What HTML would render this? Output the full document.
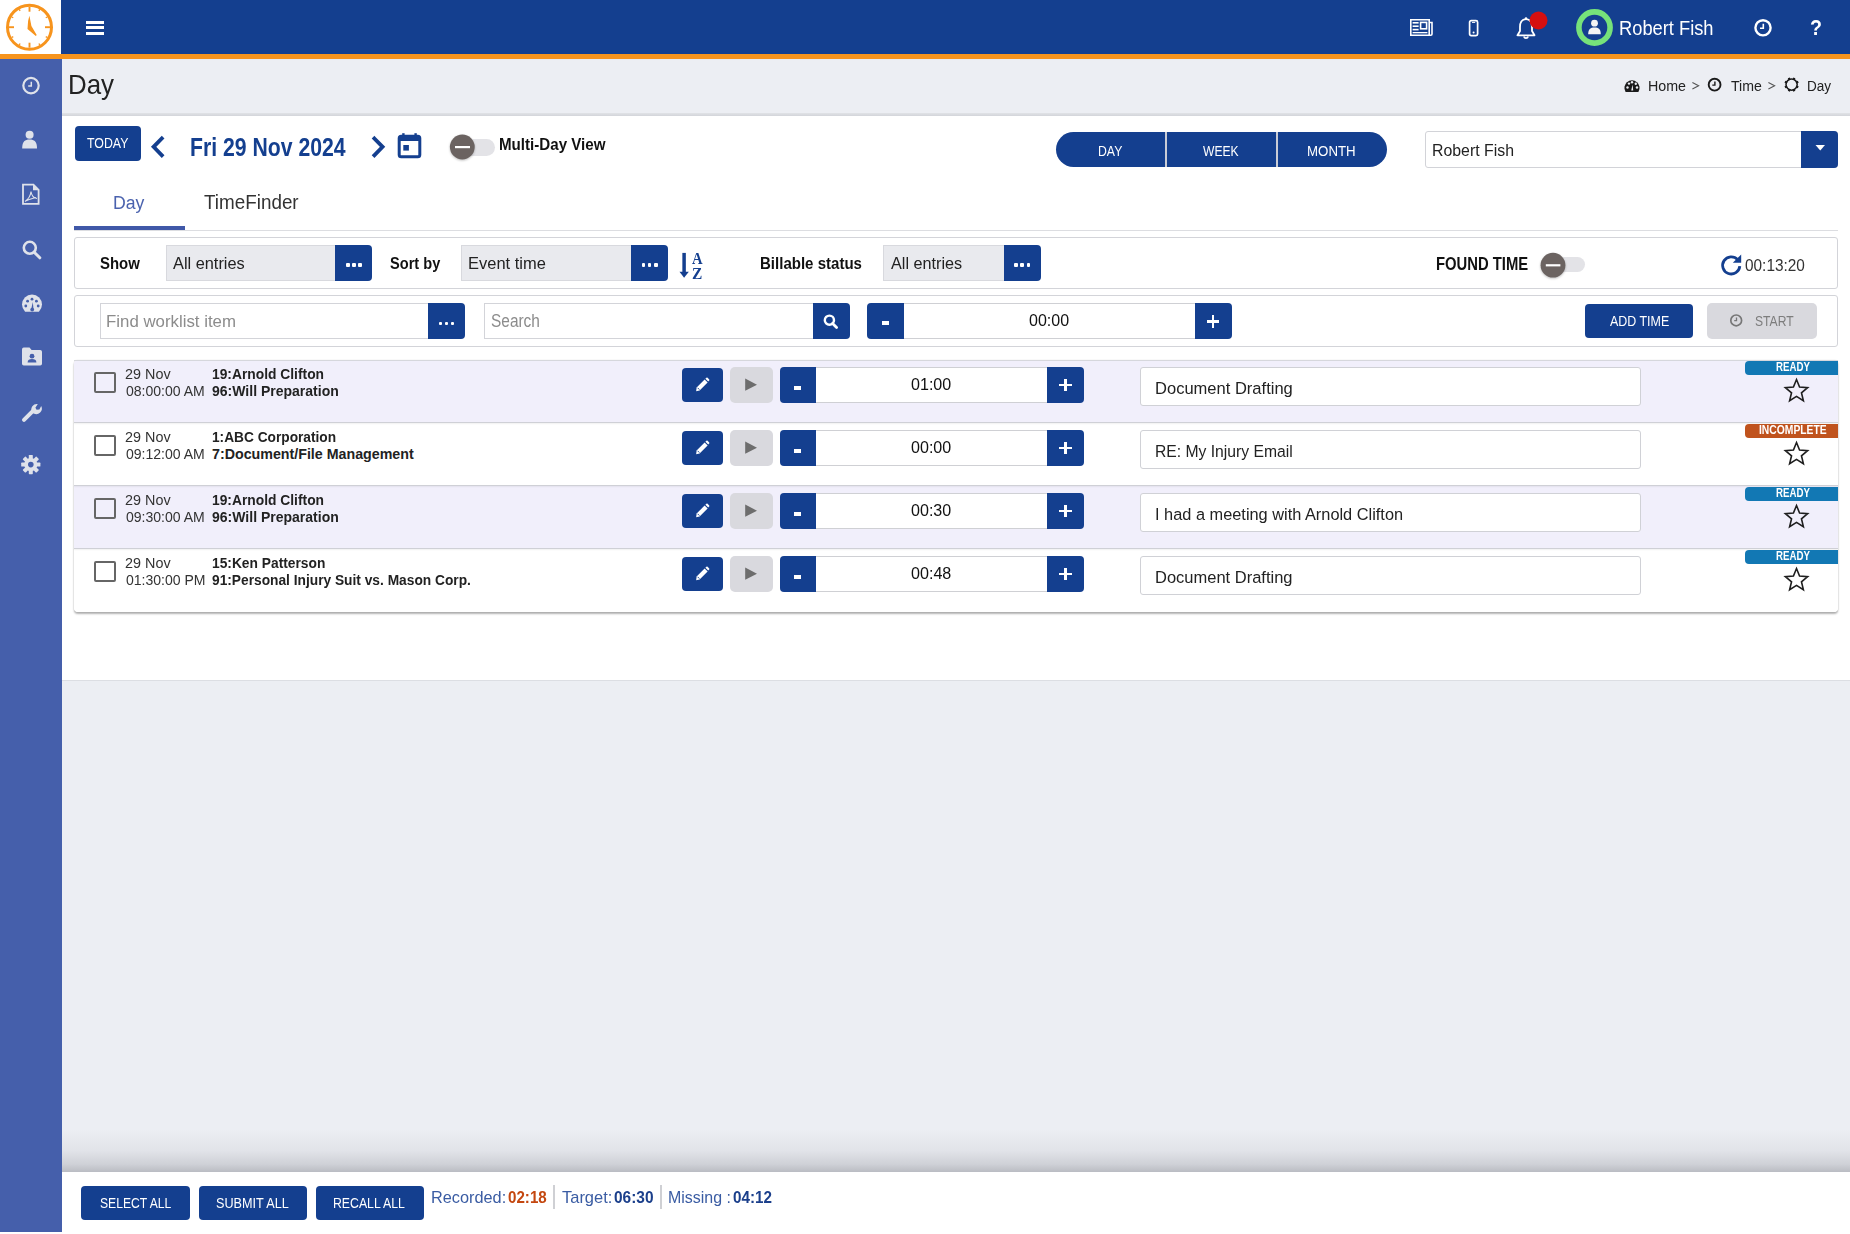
<!DOCTYPE html>
<html><head><meta charset="utf-8"><title>Day</title>
<style>
html,body{margin:0;padding:0;width:1850px;height:1234px;overflow:hidden;background:#fff;font-family:"Liberation Sans",sans-serif}
.t{position:absolute;white-space:nowrap;transform-origin:0 0;font-family:"Liberation Sans",sans-serif}
svg{overflow:visible}
</style></head><body>
<div style="position:absolute;left:0px;top:0px;width:1850px;height:1234px;background:#fff"></div>
<div style="position:absolute;left:62px;top:116px;width:1788px;height:564px;background:#fff"></div>
<div style="position:absolute;left:62px;top:681px;width:1788px;height:491px;background:#eceef3"></div>
<div style="position:absolute;left:62px;top:680px;width:1788px;height:1px;background:#dcdee3"></div>
<div style="position:absolute;left:62px;top:1129px;width:1788px;height:43px;background:linear-gradient(to bottom, rgba(150,152,160,0) 0%, rgba(150,152,160,0.12) 50%, rgba(145,147,155,0.32) 82%, rgba(140,142,150,0.52) 100%)"></div>
<div style="position:absolute;left:61px;top:0px;width:1789px;height:54px;background:#143f8f"></div>
<div style="position:absolute;left:0px;top:54px;width:1850px;height:5px;background:#f7941d"></div>
<div style="position:absolute;left:0px;top:59px;width:62px;height:1173px;background:#455fab"></div>
<div style="position:absolute;left:62px;top:59px;width:1788px;height:54px;background:#eceef3"></div>
<div style="position:absolute;left:62px;top:113px;width:1788px;height:3px;background:linear-gradient(to bottom,#e0e2e6,#d3d5da)"></div>
<svg style="position:absolute;left:0px;top:0px;" width="61" height="54" viewBox="0 0 61 54"><circle cx="29.5" cy="27.2" r="22" fill="none" stroke="#f7941d" stroke-width="3"/><line x1="29.50" y1="6.70" x2="29.50" y2="11.70" stroke="#f7941d" stroke-width="1.9"/><line x1="39.75" y1="9.45" x2="38.90" y2="10.92" stroke="#f7941d" stroke-width="1.3"/><line x1="47.25" y1="16.95" x2="45.78" y2="17.80" stroke="#f7941d" stroke-width="1.3"/><line x1="50.00" y1="27.20" x2="45.00" y2="27.20" stroke="#f7941d" stroke-width="1.9"/><line x1="47.25" y1="37.45" x2="45.78" y2="36.60" stroke="#f7941d" stroke-width="1.3"/><line x1="39.75" y1="44.95" x2="38.90" y2="43.48" stroke="#f7941d" stroke-width="1.3"/><line x1="29.50" y1="47.70" x2="29.50" y2="42.70" stroke="#f7941d" stroke-width="1.9"/><line x1="19.25" y1="44.95" x2="20.10" y2="43.48" stroke="#f7941d" stroke-width="1.3"/><line x1="11.75" y1="37.45" x2="13.22" y2="36.60" stroke="#f7941d" stroke-width="1.3"/><line x1="9.00" y1="27.20" x2="14.00" y2="27.20" stroke="#f7941d" stroke-width="1.9"/><line x1="11.75" y1="16.95" x2="13.22" y2="17.80" stroke="#f7941d" stroke-width="1.3"/><line x1="19.25" y1="9.45" x2="20.10" y2="10.92" stroke="#f7941d" stroke-width="1.3"/><path d="M29.4,15.8 L31.4,26 L36.7,35 L35.8,35.9 L27.5,29 L28.1,21 Z" fill="#f7941d"/></svg>
<div style="position:absolute;left:86px;top:20.5px;width:18px;height:3.3px;background:#fff"></div>
<div style="position:absolute;left:86px;top:26.0px;width:18px;height:3.3px;background:#fff"></div>
<div style="position:absolute;left:86px;top:31.6px;width:18px;height:3.3px;background:#fff"></div>
<svg style="position:absolute;left:1408px;top:17px;" width="27" height="21" viewBox="0 0 27 21"><g fill="none" stroke="#fff" stroke-width="1.6"><path d="M2.8,2.8 H21.2 V18.2 H2.8 Z"/><path d="M21.2,5.5 H24 V17 Q24,18.2 22.8,18.2 H21.2"/></g><g fill="#fff"><rect x="4.6" y="5" width="6" height="1.6"/><rect x="4.6" y="8.4" width="6" height="1.6"/><rect x="4.6" y="11.8" width="6" height="1.6"/><rect x="4.6" y="15" width="14.8" height="1.3"/></g><rect x="12.6" y="5.4" width="6" height="6.4" fill="none" stroke="#fff" stroke-width="1.6"/></svg>
<svg style="position:absolute;left:1467px;top:18px;" width="13" height="19" viewBox="0 0 13 19"><rect x="2.6" y="2.6" width="8" height="15" rx="1.6" fill="none" stroke="#fff" stroke-width="1.7"/><circle cx="6.6" cy="14.6" r="1" fill="#fff"/><rect x="5" y="4" width="3.2" height="0.9" fill="#fff"/></svg>
<svg style="position:absolute;left:1514px;top:15px;" width="24" height="26" viewBox="0 0 24 26"><path d="M12,4.2 C7.5,4.2 6,8 6,12 V16 L3.5,20.3 H20.5 L18,16 V12 C18,8 16.5,4.2 12,4.2 Z" fill="none" stroke="#fff" stroke-width="1.8" stroke-linejoin="round"/><circle cx="12" cy="3.6" r="1.3" fill="#fff"/><path d="M9.8,21.5 A2.3,2.3 0 0 0 14.2,21.5" fill="none" stroke="#fff" stroke-width="1.6"/></svg>
<svg style="position:absolute;left:1529px;top:11px;" width="20" height="20" viewBox="0 0 20 20"><circle cx="9.5" cy="9.5" r="9" fill="#d50f10"/></svg>
<svg style="position:absolute;left:1575px;top:8px;" width="40" height="40" viewBox="0 0 40 40"><circle cx="19.5" cy="19.5" r="15.6" fill="none" stroke="#76e27a" stroke-width="5.6"/><circle cx="19.5" cy="15.2" r="3.4" fill="#f4f4f4"/><path d="M13.2,26.2 C13.2,21 15.5,19.5 19.5,19.5 C23.5,19.5 25.8,21 25.8,26.2 Z" fill="#f4f4f4"/></svg>
<svg style="position:absolute;left:1752px;top:17px;" width="22" height="22" viewBox="0 0 22 22"><circle cx="11" cy="10.8" r="7.6" fill="none" stroke="#fff" stroke-width="2.4"/><path d="M11.3,6.8 V11.2 H8" fill="none" stroke="#fff" stroke-width="1.6"/></svg>
<svg style="position:absolute;left:1690px;top:80px;" width="12" height="12" viewBox="0 0 12 12"><path d="M2.4,2.6 L8.6,5.8 L2.4,9" fill="none" stroke="#555" stroke-width="1.1"/></svg>
<svg style="position:absolute;left:1766px;top:80px;" width="12" height="12" viewBox="0 0 12 12"><path d="M2.4,2.6 L8.6,5.8 L2.4,9" fill="none" stroke="#555" stroke-width="1.1"/></svg>
<svg style="position:absolute;left:1622px;top:76px;" width="20" height="18" viewBox="0 0 20 18"><path d="M3.6,16 A7.6,7.6 0 1 1 16.4,16 Z" fill="#1a1a1a"/><g fill="#eceef3"><circle cx="5.5" cy="11.5" r="1.2"/><circle cx="7" cy="7.6" r="1.2"/><circle cx="10" cy="6.2" r="1.2"/><circle cx="13.8" cy="7.8" r="1.2"/><circle cx="15" cy="11.5" r="1.2"/><path d="M9.2,14.5 L10.6,8.6 L11.2,14.5 Z"/></g></svg>
<svg style="position:absolute;left:1706px;top:76px;" width="18" height="18" viewBox="0 0 18 18"><circle cx="8.6" cy="8.7" r="5.9" fill="none" stroke="#1a1a1a" stroke-width="1.9"/><path d="M8.9,5.6 V9.1 H6.3" fill="none" stroke="#1a1a1a" stroke-width="1.4"/></svg>
<svg style="position:absolute;left:1782px;top:76px;" width="20" height="20" viewBox="0 0 20 20"><g transform="translate(9.6,8.6)"><rect x="-1.1" y="-7.2" width="2.2" height="2.4" transform="rotate(22.5)" fill="#1a1a1a"/><rect x="-1.1" y="-7.2" width="2.2" height="2.4" transform="rotate(67.5)" fill="#1a1a1a"/><rect x="-1.1" y="-7.2" width="2.2" height="2.4" transform="rotate(112.5)" fill="#1a1a1a"/><rect x="-1.1" y="-7.2" width="2.2" height="2.4" transform="rotate(157.5)" fill="#1a1a1a"/><rect x="-1.1" y="-7.2" width="2.2" height="2.4" transform="rotate(202.5)" fill="#1a1a1a"/><rect x="-1.1" y="-7.2" width="2.2" height="2.4" transform="rotate(247.5)" fill="#1a1a1a"/><rect x="-1.1" y="-7.2" width="2.2" height="2.4" transform="rotate(292.5)" fill="#1a1a1a"/><rect x="-1.1" y="-7.2" width="2.2" height="2.4" transform="rotate(337.5)" fill="#1a1a1a"/><circle cx="0" cy="0" r="5.6" fill="none" stroke="#1a1a1a" stroke-width="1.5"/></g></svg>
<svg style="position:absolute;left:20px;top:75px;" width="22" height="22" viewBox="0 0 22 22"><circle cx="11" cy="10.6" r="7.7" fill="none" stroke="#dfe2ea" stroke-width="2.2"/><path d="M11.3,6.7 V11 H8.2" fill="none" stroke="#dfe2ea" stroke-width="1.5"/></svg>
<svg style="position:absolute;left:20px;top:128px;" width="22" height="24" viewBox="0 0 22 24"><circle cx="9.6" cy="6.8" r="4" fill="#dfe2ea"/><path d="M2.2,20.6 C2.2,13.5 5,11.6 9.6,11.6 C14.2,11.6 17,13.5 17,20.6 Z" fill="#dfe2ea"/></svg>
<svg style="position:absolute;left:20px;top:182px;" width="22" height="25" viewBox="0 0 22 25"><path d="M3,2.6 H13.4 L18.6,7.8 V21.8 H3 Z" fill="none" stroke="#dfe2ea" stroke-width="1.8"/><path d="M13,2.6 V8.2 H18.6" fill="#dfe2ea"/><path d="M11,9.5 C10.5,14 8,17.5 5,19.5 M11,9.5 C11.5,13.5 13.5,16 17,16.5 M5.5,19 C9,17 12,16.5 16,15.5" fill="none" stroke="#dfe2ea" stroke-width="1.1"/></svg>
<svg style="position:absolute;left:20px;top:238px;" width="24" height="24" viewBox="0 0 24 24"><circle cx="9.8" cy="9.8" r="6" fill="none" stroke="#dfe2ea" stroke-width="2.6"/><path d="M14.2,14.2 L19.8,19.8" stroke="#dfe2ea" stroke-width="3" stroke-linecap="round"/></svg>
<svg style="position:absolute;left:20px;top:292px;" width="24" height="22" viewBox="0 0 24 22"><path d="M5.1,19.7 A10,10 0 1 1 18.9,19.7 Z" fill="#dfe2ea"/><g fill="#455fab"><circle cx="5.8" cy="14" r="1.4"/><circle cx="7.6" cy="9.2" r="1.4"/><circle cx="12" cy="7.2" r="1.4"/><circle cx="16.4" cy="9.2" r="1.4"/><circle cx="18.2" cy="14" r="1.4"/><path d="M11,18 L12.8,10 L13.6,18 Z"/></g><circle cx="12.2" cy="17.6" r="1.9" fill="#455fab"/></svg>
<svg style="position:absolute;left:20px;top:345px;" width="24" height="24" viewBox="0 0 24 24"><path d="M2,4.5 Q2,2.6 3.8,2.6 H9.5 L11.6,5 H20.2 Q22,5 22,6.8 V18.8 Q22,20.6 20.2,20.6 H3.8 Q2,20.6 2,18.8 Z" fill="#dfe2ea"/><circle cx="12" cy="11.2" r="2.4" fill="#455fab"/><path d="M7.6,17.6 C7.6,14.8 9.4,14 12,14 C14.6,14 16.4,14.8 16.4,17.6 Z" fill="#455fab"/></svg>
<svg style="position:absolute;left:20px;top:400px;" width="24" height="24" viewBox="0 0 24 24"><path d="M4,19.8 L12.5,11.3" stroke="#dfe2ea" stroke-width="4" stroke-linecap="round"/><path d="M12,12.2 A5.6,5.6 0 0 1 17.8,4 L15.4,7.8 L16.6,9.8 L19.4,9.4 L21.2,6 A5.6,5.6 0 0 1 13.6,13.5 Z" fill="#dfe2ea"/></svg>
<svg style="position:absolute;left:20px;top:454px;" width="24" height="24" viewBox="0 0 24 24"><g transform="translate(10.8,10.6)"><rect x="-2" y="-9.6" width="4" height="4.2" rx="0.6" transform="rotate(0)" fill="#dfe2ea"/><rect x="-2" y="-9.6" width="4" height="4.2" rx="0.6" transform="rotate(45)" fill="#dfe2ea"/><rect x="-2" y="-9.6" width="4" height="4.2" rx="0.6" transform="rotate(90)" fill="#dfe2ea"/><rect x="-2" y="-9.6" width="4" height="4.2" rx="0.6" transform="rotate(135)" fill="#dfe2ea"/><rect x="-2" y="-9.6" width="4" height="4.2" rx="0.6" transform="rotate(180)" fill="#dfe2ea"/><rect x="-2" y="-9.6" width="4" height="4.2" rx="0.6" transform="rotate(225)" fill="#dfe2ea"/><rect x="-2" y="-9.6" width="4" height="4.2" rx="0.6" transform="rotate(270)" fill="#dfe2ea"/><rect x="-2" y="-9.6" width="4" height="4.2" rx="0.6" transform="rotate(315)" fill="#dfe2ea"/><circle r="6.6" fill="#dfe2ea"/><circle r="2.8" fill="#455fab"/></g></svg>
<div style="position:absolute;left:75px;top:126px;width:66px;height:35px;background:#143f8f;border-radius:4px"></div>
<svg style="position:absolute;left:146px;top:132px;" width="24" height="30" viewBox="0 0 24 30"><path d="M15.8,6.5 L7.6,14.8 L15.8,23.2" fill="none" stroke="#143f8f" stroke-width="3.8" stroke-linecap="square"/></svg>
<svg style="position:absolute;left:366px;top:132px;" width="24" height="30" viewBox="0 0 24 30"><path d="M8.4,6.5 L16.6,14.8 L8.4,23.2" fill="none" stroke="#143f8f" stroke-width="3.8" stroke-linecap="square"/></svg>
<svg style="position:absolute;left:396px;top:131px;" width="28" height="30" viewBox="0 0 28 30"><rect x="3.2" y="5.3" width="20.6" height="20.4" rx="2" fill="none" stroke="#143f8f" stroke-width="3"/><rect x="3" y="5" width="21" height="5" fill="#143f8f"/><rect x="6.2" y="2.2" width="2.4" height="4" fill="#143f8f"/><rect x="18.4" y="2.2" width="2.4" height="4" fill="#143f8f"/><rect x="7.3" y="14" width="5.6" height="5.6" fill="#143f8f"/></svg>
<div style="position:absolute;left:458px;top:138.6px;width:36.5px;height:17.0px;background:#e3e3e7;border-radius:9px"></div>
<svg style="position:absolute;left:446px;top:130px;" width="34" height="34" viewBox="0 0 34 34"><circle cx="16.3" cy="17" r="12.4" fill="#6b6361" style="filter:drop-shadow(0 1px 1px rgba(0,0,0,.25))"/><rect x="9" y="16" width="15" height="2.2" fill="#fff"/></svg>
<div style="position:absolute;left:1056px;top:132px;width:331px;height:35px;background:#143f8f;border-radius:18px"></div>
<div style="position:absolute;left:1165px;top:132px;width:2px;height:35px;background:#c9ccd6"></div>
<div style="position:absolute;left:1275.5px;top:132px;width:2.0px;height:35px;background:#c9ccd6"></div>
<div style="position:absolute;left:1425px;top:131px;width:413px;height:37px;background:#fff;border:1px solid #d2d3d8;box-sizing:border-box;border-radius:3px"></div>
<div style="position:absolute;left:1800.5px;top:131px;width:37.5px;height:37px;background:#143f8f;border-radius:0 4px 4px 0"></div>
<svg style="position:absolute;left:1813px;top:143px;" width="14" height="10" viewBox="0 0 14 10"><path d="M2.5,2 H12 L7.25,7.5 Z" fill="#fff"/></svg>
<div style="position:absolute;left:74px;top:229.5px;width:1764px;height:1.0px;background:#dcdde1"></div>
<div style="position:absolute;left:74px;top:226px;width:111px;height:4px;background:#4058a8"></div>
<div style="position:absolute;left:74px;top:237px;width:1764px;height:52px;border:1px solid #d3d4d9;box-sizing:border-box;border-radius:3px;background:#fff"></div>
<div style="position:absolute;left:165.5px;top:244.6px;width:171.9px;height:36.5px;background:#e9eaee;border:1px solid #d8d9de;box-sizing:border-box"></div>
<div style="position:absolute;left:335.4px;top:244.6px;width:36.9px;height:36.5px;background:#143f8f;border-radius:0 4px 4px 0"></div>
<div style="position:absolute;left:345.95px;top:263.2px;width:3.6px;height:3.7px;background:#fff;border-radius:1px"></div>
<div style="position:absolute;left:352.05px;top:263.2px;width:3.6px;height:3.7px;background:#fff;border-radius:1px"></div>
<div style="position:absolute;left:358.15px;top:263.2px;width:3.6px;height:3.7px;background:#fff;border-radius:1px"></div>
<div style="position:absolute;left:461.4px;top:245px;width:172.0px;height:36px;background:#e9eaee;border:1px solid #d8d9de;box-sizing:border-box"></div>
<div style="position:absolute;left:631.4px;top:245px;width:36.6px;height:36px;background:#143f8f;border-radius:0 4px 4px 0"></div>
<div style="position:absolute;left:641.8px;top:263.35px;width:3.6px;height:3.7px;background:#fff;border-radius:1px"></div>
<div style="position:absolute;left:647.9px;top:263.35px;width:3.6px;height:3.7px;background:#fff;border-radius:1px"></div>
<div style="position:absolute;left:654.0px;top:263.35px;width:3.6px;height:3.7px;background:#fff;border-radius:1px"></div>
<svg style="position:absolute;left:676px;top:250px;" width="30" height="30" viewBox="0 0 30 30"><path d="M8.1,2.9 V23" stroke="#143f8f" stroke-width="3.5"/><path d="M3.5,21.8 L8.1,27.8 L12.8,21.8 Z" fill="#143f8f"/></svg>
<div style="position:absolute;left:883.3px;top:244.9px;width:122.5px;height:36.0px;background:#e9eaee;border:1px solid #d8d9de;box-sizing:border-box"></div>
<div style="position:absolute;left:1003.8px;top:244.9px;width:36.8px;height:36.0px;background:#143f8f;border-radius:0 4px 4px 0"></div>
<div style="position:absolute;left:1014.3px;top:263.25px;width:3.6px;height:3.7px;background:#fff;border-radius:1px"></div>
<div style="position:absolute;left:1020.4px;top:263.25px;width:3.6px;height:3.7px;background:#fff;border-radius:1px"></div>
<div style="position:absolute;left:1026.5px;top:263.25px;width:3.6px;height:3.7px;background:#fff;border-radius:1px"></div>
<div style="position:absolute;left:1548px;top:256.7px;width:36.6px;height:15.8px;background:#e3e3e7;border-radius:8px"></div>
<svg style="position:absolute;left:1538px;top:250px;" width="30" height="30" viewBox="0 0 30 30"><circle cx="15" cy="15.2" r="12.4" fill="#6b6361" style="filter:drop-shadow(0 1px 1px rgba(0,0,0,.25))"/><rect x="7.8" y="14.2" width="14.6" height="2.2" fill="#fff"/></svg>
<svg style="position:absolute;left:1717.6px;top:251px;" width="26" height="26" viewBox="0 0 26 26"><path d="M19.6,8.6 A8.6,8.6 0 1 0 21.8,15.2" fill="none" stroke="#143f8f" stroke-width="2.8"/><path d="M23.2,3.4 V11.8 H14.8 Z" fill="#143f8f"/></svg>
<div style="position:absolute;left:74px;top:295px;width:1764px;height:51.5px;border:1px solid #d3d4d9;box-sizing:border-box;border-radius:3px;background:#fff"></div>
<div style="position:absolute;left:100.3px;top:303px;width:329.7px;height:36.4px;background:#fff;border:1px solid #d3d4d9;box-sizing:border-box"></div>
<div style="position:absolute;left:428.3px;top:303px;width:36.4px;height:36.4px;background:#143f8f;border-radius:0 4px 4px 0"></div>
<div style="position:absolute;left:438.6px;top:321.5px;width:3.6px;height:3.7px;background:#fff;border-radius:1px"></div>
<div style="position:absolute;left:444.7px;top:321.5px;width:3.6px;height:3.7px;background:#fff;border-radius:1px"></div>
<div style="position:absolute;left:450.8px;top:321.5px;width:3.6px;height:3.7px;background:#fff;border-radius:1px"></div>
<div style="position:absolute;left:484px;top:303px;width:331px;height:36.4px;background:#fff;border:1px solid #d3d4d9;box-sizing:border-box"></div>
<div style="position:absolute;left:813px;top:303px;width:36.7px;height:36.4px;background:#143f8f;border-radius:0 4px 4px 0"></div>
<svg style="position:absolute;left:821px;top:312px;" width="20" height="20" viewBox="0 0 20 20"><circle cx="8.4" cy="8.2" r="4.6" fill="none" stroke="#fff" stroke-width="2.4"/><path d="M11.6,11.4 L15.6,15.4" stroke="#fff" stroke-width="2.8" stroke-linecap="round"/></svg>
<div style="position:absolute;left:900px;top:302.8px;width:300px;height:36.5px;background:#fff;border-top:1px solid #cfd0d4;border-bottom:1px solid #cfd0d4;box-sizing:border-box"></div>
<div style="position:absolute;left:867.4px;top:302.8px;width:36.4px;height:36.5px;background:#143f8f;border-radius:4px 0 0 4px"></div>
<div style="position:absolute;left:1195.2px;top:302.8px;width:36.4px;height:36.5px;background:#143f8f;border-radius:0 4px 4px 0"></div>
<div style="position:absolute;left:881.7px;top:321.2px;width:7.3px;height:4.0px;background:#fff"></div>
<div style="position:absolute;left:1206.8px;top:320.4px;width:12.6px;height:2.9px;background:#fff"></div>
<div style="position:absolute;left:1211.7px;top:315.4px;width:2.8px;height:12.7px;background:#fff"></div>
<div style="position:absolute;left:1584.8px;top:303.8px;width:108.6px;height:34.3px;background:#143f8f;border-radius:4px"></div>
<div style="position:absolute;left:1707.3px;top:302.6px;width:110.2px;height:36.6px;background:#d9d9de;border-radius:5px"></div>
<svg style="position:absolute;left:1727px;top:311px;" width="19" height="19" viewBox="0 0 19 19"><circle cx="9.2" cy="9.4" r="5.4" fill="none" stroke="#777" stroke-width="1.7"/><path d="M9.5,6.4 V9.7 H7.2" fill="none" stroke="#777" stroke-width="1.3"/></svg>
<div style="position:absolute;left:74px;top:359.5px;width:1764px;height:252.5px;background:#fff;border-radius:4px;box-shadow:0 2px 2px rgba(0,0,0,0.3), 0 0 1px rgba(0,0,0,0.25)"></div>
<div style="position:absolute;left:74px;top:359.5px;width:1764px;height:63.0px;background:#f1effb;border-radius:4px 4px 0 0;"></div>
<div style="position:absolute;left:74px;top:359.5px;width:1764px;height:1.0px;background:#d6d7dc"></div>
<div style="position:absolute;left:94.2px;top:371.8px;width:21.9px;height:21.5px;border:2.4px solid #666;box-sizing:border-box;border-radius:2px;background:transparent"></div>
<div style="position:absolute;left:681.8px;top:367.7px;width:41.0px;height:34.5px;background:#143f8f;border-radius:4px"></div>
<svg style="position:absolute;left:692px;top:375px;" width="20" height="20" viewBox="0 0 20 20"><path d="M4.2,16.2 L4.6,12.6 L12.6,4.6 L15.6,7.6 L7.6,15.6 Z" fill="#fff"/><path d="M13.4,3.8 L14.4,2.8 Q15,2.3 15.6,2.8 L17.2,4.4 Q17.7,5 17.2,5.6 L16.2,6.6 Z" fill="#fff"/><path d="M5.6,12.8 L7.4,14.6" stroke="#143f8f" stroke-width="0.9"/></svg>
<div style="position:absolute;left:730.3px;top:366.8px;width:42.7px;height:36.7px;background:#d9d9de;border-radius:5px"></div>
<svg style="position:absolute;left:743px;top:376px;" width="18" height="18" viewBox="0 0 18 18"><path d="M2.2,2.6 L14,8.7 L2.2,14.8 Z" fill="#6d6d6d"/></svg>
<div style="position:absolute;left:810px;top:367px;width:240px;height:36.2px;background:#fff;border-top:1px solid #cfd0d4;border-bottom:1px solid #cfd0d4;box-sizing:border-box"></div>
<div style="position:absolute;left:779.7px;top:366.8px;width:36.8px;height:36.7px;background:#143f8f;border-radius:4px 0 0 4px"></div>
<div style="position:absolute;left:1047.2px;top:367px;width:36.6px;height:36.2px;background:#143f8f;border-radius:0 4px 4px 0"></div>
<div style="position:absolute;left:793.7px;top:386.2px;width:7.5px;height:3.4px;background:#fff"></div>
<div style="position:absolute;left:1059.2px;top:383.6px;width:12.6px;height:2.9px;background:#fff"></div>
<div style="position:absolute;left:1064.1px;top:378.8px;width:2.8px;height:12.6px;background:#fff"></div>
<div style="position:absolute;left:1140.3px;top:367.1px;width:500.8px;height:38.5px;background:#fff;border:1px solid #d0d1d6;box-sizing:border-box;border-radius:3px"></div>
<div style="position:absolute;left:1745px;top:360.6px;width:93px;height:14.3px;background:#1278b4;border-radius:4px 0 0 4px"></div>
<svg style="position:absolute;left:1780px;top:375px;" width="34" height="32" viewBox="0 0 34 32"><polygon points="16.50,4.50 19.56,11.99 27.63,12.58 21.45,17.81 23.38,25.67 16.50,21.40 9.62,25.67 11.55,17.81 5.37,12.58 13.44,11.99" fill="none" stroke="#1e1e1e" stroke-width="1.6" stroke-linejoin="miter"/></svg>
<div style="position:absolute;left:74px;top:422.5px;width:1764px;height:63.0px;background:#fff;"></div>
<div style="position:absolute;left:74px;top:422.0px;width:1764px;height:1.0px;background:#cfd0d6;box-shadow:0 1px 1.5px rgba(0,0,0,0.07)"></div>
<div style="position:absolute;left:94.2px;top:434.8px;width:21.9px;height:21.5px;border:2.4px solid #666;box-sizing:border-box;border-radius:2px;background:transparent"></div>
<div style="position:absolute;left:681.8px;top:430.7px;width:41.0px;height:34.5px;background:#143f8f;border-radius:4px"></div>
<svg style="position:absolute;left:692px;top:438px;" width="20" height="20" viewBox="0 0 20 20"><path d="M4.2,16.2 L4.6,12.6 L12.6,4.6 L15.6,7.6 L7.6,15.6 Z" fill="#fff"/><path d="M13.4,3.8 L14.4,2.8 Q15,2.3 15.6,2.8 L17.2,4.4 Q17.7,5 17.2,5.6 L16.2,6.6 Z" fill="#fff"/><path d="M5.6,12.8 L7.4,14.6" stroke="#143f8f" stroke-width="0.9"/></svg>
<div style="position:absolute;left:730.3px;top:429.8px;width:42.7px;height:36.7px;background:#d9d9de;border-radius:5px"></div>
<svg style="position:absolute;left:743px;top:439px;" width="18" height="18" viewBox="0 0 18 18"><path d="M2.2,2.6 L14,8.7 L2.2,14.8 Z" fill="#6d6d6d"/></svg>
<div style="position:absolute;left:810px;top:430px;width:240px;height:36.2px;background:#fff;border-top:1px solid #cfd0d4;border-bottom:1px solid #cfd0d4;box-sizing:border-box"></div>
<div style="position:absolute;left:779.7px;top:429.8px;width:36.8px;height:36.7px;background:#143f8f;border-radius:4px 0 0 4px"></div>
<div style="position:absolute;left:1047.2px;top:430px;width:36.6px;height:36.2px;background:#143f8f;border-radius:0 4px 4px 0"></div>
<div style="position:absolute;left:793.7px;top:449.2px;width:7.5px;height:3.4px;background:#fff"></div>
<div style="position:absolute;left:1059.2px;top:446.6px;width:12.6px;height:2.9px;background:#fff"></div>
<div style="position:absolute;left:1064.1px;top:441.8px;width:2.8px;height:12.6px;background:#fff"></div>
<div style="position:absolute;left:1140.3px;top:430.1px;width:500.8px;height:38.5px;background:#fff;border:1px solid #d0d1d6;box-sizing:border-box;border-radius:3px"></div>
<div style="position:absolute;left:1745px;top:423.6px;width:93px;height:14.3px;background:#c0531d;border-radius:4px 0 0 4px"></div>
<svg style="position:absolute;left:1780px;top:438px;" width="34" height="32" viewBox="0 0 34 32"><polygon points="16.50,4.50 19.56,11.99 27.63,12.58 21.45,17.81 23.38,25.67 16.50,21.40 9.62,25.67 11.55,17.81 5.37,12.58 13.44,11.99" fill="none" stroke="#1e1e1e" stroke-width="1.6" stroke-linejoin="miter"/></svg>
<div style="position:absolute;left:74px;top:485.5px;width:1764px;height:63.0px;background:#f1effb;"></div>
<div style="position:absolute;left:74px;top:485.0px;width:1764px;height:1.0px;background:#cfd0d6;box-shadow:0 1px 1.5px rgba(0,0,0,0.07)"></div>
<div style="position:absolute;left:94.2px;top:497.8px;width:21.9px;height:21.5px;border:2.4px solid #666;box-sizing:border-box;border-radius:2px;background:transparent"></div>
<div style="position:absolute;left:681.8px;top:493.7px;width:41.0px;height:34.5px;background:#143f8f;border-radius:4px"></div>
<svg style="position:absolute;left:692px;top:501px;" width="20" height="20" viewBox="0 0 20 20"><path d="M4.2,16.2 L4.6,12.6 L12.6,4.6 L15.6,7.6 L7.6,15.6 Z" fill="#fff"/><path d="M13.4,3.8 L14.4,2.8 Q15,2.3 15.6,2.8 L17.2,4.4 Q17.7,5 17.2,5.6 L16.2,6.6 Z" fill="#fff"/><path d="M5.6,12.8 L7.4,14.6" stroke="#143f8f" stroke-width="0.9"/></svg>
<div style="position:absolute;left:730.3px;top:492.8px;width:42.7px;height:36.7px;background:#d9d9de;border-radius:5px"></div>
<svg style="position:absolute;left:743px;top:502px;" width="18" height="18" viewBox="0 0 18 18"><path d="M2.2,2.6 L14,8.7 L2.2,14.8 Z" fill="#6d6d6d"/></svg>
<div style="position:absolute;left:810px;top:493px;width:240px;height:36.2px;background:#fff;border-top:1px solid #cfd0d4;border-bottom:1px solid #cfd0d4;box-sizing:border-box"></div>
<div style="position:absolute;left:779.7px;top:492.8px;width:36.8px;height:36.7px;background:#143f8f;border-radius:4px 0 0 4px"></div>
<div style="position:absolute;left:1047.2px;top:493px;width:36.6px;height:36.2px;background:#143f8f;border-radius:0 4px 4px 0"></div>
<div style="position:absolute;left:793.7px;top:512.2px;width:7.5px;height:3.4px;background:#fff"></div>
<div style="position:absolute;left:1059.2px;top:509.6px;width:12.6px;height:2.9px;background:#fff"></div>
<div style="position:absolute;left:1064.1px;top:504.8px;width:2.8px;height:12.6px;background:#fff"></div>
<div style="position:absolute;left:1140.3px;top:493.1px;width:500.8px;height:38.5px;background:#fff;border:1px solid #d0d1d6;box-sizing:border-box;border-radius:3px"></div>
<div style="position:absolute;left:1745px;top:486.6px;width:93px;height:14.3px;background:#1278b4;border-radius:4px 0 0 4px"></div>
<svg style="position:absolute;left:1780px;top:501px;" width="34" height="32" viewBox="0 0 34 32"><polygon points="16.50,4.50 19.56,11.99 27.63,12.58 21.45,17.81 23.38,25.67 16.50,21.40 9.62,25.67 11.55,17.81 5.37,12.58 13.44,11.99" fill="none" stroke="#1e1e1e" stroke-width="1.6" stroke-linejoin="miter"/></svg>
<div style="position:absolute;left:74px;top:548.5px;width:1764px;height:63.0px;background:#fff;border-radius:0 0 4px 4px;"></div>
<div style="position:absolute;left:74px;top:548.0px;width:1764px;height:1.0px;background:#cfd0d6;box-shadow:0 1px 1.5px rgba(0,0,0,0.07)"></div>
<div style="position:absolute;left:94.2px;top:560.8px;width:21.9px;height:21.5px;border:2.4px solid #666;box-sizing:border-box;border-radius:2px;background:transparent"></div>
<div style="position:absolute;left:681.8px;top:556.7px;width:41.0px;height:34.5px;background:#143f8f;border-radius:4px"></div>
<svg style="position:absolute;left:692px;top:564px;" width="20" height="20" viewBox="0 0 20 20"><path d="M4.2,16.2 L4.6,12.6 L12.6,4.6 L15.6,7.6 L7.6,15.6 Z" fill="#fff"/><path d="M13.4,3.8 L14.4,2.8 Q15,2.3 15.6,2.8 L17.2,4.4 Q17.7,5 17.2,5.6 L16.2,6.6 Z" fill="#fff"/><path d="M5.6,12.8 L7.4,14.6" stroke="#143f8f" stroke-width="0.9"/></svg>
<div style="position:absolute;left:730.3px;top:555.8px;width:42.7px;height:36.7px;background:#d9d9de;border-radius:5px"></div>
<svg style="position:absolute;left:743px;top:565px;" width="18" height="18" viewBox="0 0 18 18"><path d="M2.2,2.6 L14,8.7 L2.2,14.8 Z" fill="#6d6d6d"/></svg>
<div style="position:absolute;left:810px;top:556px;width:240px;height:36.2px;background:#fff;border-top:1px solid #cfd0d4;border-bottom:1px solid #cfd0d4;box-sizing:border-box"></div>
<div style="position:absolute;left:779.7px;top:555.8px;width:36.8px;height:36.7px;background:#143f8f;border-radius:4px 0 0 4px"></div>
<div style="position:absolute;left:1047.2px;top:556px;width:36.6px;height:36.2px;background:#143f8f;border-radius:0 4px 4px 0"></div>
<div style="position:absolute;left:793.7px;top:575.2px;width:7.5px;height:3.4px;background:#fff"></div>
<div style="position:absolute;left:1059.2px;top:572.6px;width:12.6px;height:2.9px;background:#fff"></div>
<div style="position:absolute;left:1064.1px;top:567.8px;width:2.8px;height:12.6px;background:#fff"></div>
<div style="position:absolute;left:1140.3px;top:556.1px;width:500.8px;height:38.5px;background:#fff;border:1px solid #d0d1d6;box-sizing:border-box;border-radius:3px"></div>
<div style="position:absolute;left:1745px;top:549.6px;width:93px;height:14.3px;background:#1278b4;border-radius:4px 0 0 4px"></div>
<svg style="position:absolute;left:1780px;top:564px;" width="34" height="32" viewBox="0 0 34 32"><polygon points="16.50,4.50 19.56,11.99 27.63,12.58 21.45,17.81 23.38,25.67 16.50,21.40 9.62,25.67 11.55,17.81 5.37,12.58 13.44,11.99" fill="none" stroke="#1e1e1e" stroke-width="1.6" stroke-linejoin="miter"/></svg>
<div style="position:absolute;left:81.4px;top:1185.5px;width:108.3px;height:34.3px;background:#143f8f;border-radius:4px"></div>
<div style="position:absolute;left:198.8px;top:1185.5px;width:108.0px;height:34.3px;background:#143f8f;border-radius:4px"></div>
<div style="position:absolute;left:315.7px;top:1185.5px;width:108.6px;height:34.3px;background:#143f8f;border-radius:4px"></div>
<div style="position:absolute;left:553px;top:1185px;width:2px;height:24px;background:#cfd0d4"></div>
<div style="position:absolute;left:660.3px;top:1185px;width:2.0px;height:24px;background:#cfd0d4"></div>
<div class="t" style="left:1618.54px;top:17.82px;font-size:20.29px;line-height:20.29px;font-weight:normal;color:#fff;transform:scaleX(0.9019);">Robert Fish</div>
<div class="t" style="left:1810.12px;top:16.73px;font-size:21.58px;line-height:21.58px;font-weight:bold;color:#fff;transform:scaleX(0.9085);">?</div>
<div class="t" style="left:67.93px;top:70.69px;font-size:27.54px;line-height:27.54px;font-weight:normal;color:#222;transform:scaleX(0.9409);">Day</div>
<div class="t" style="left:1647.56px;top:77.62px;font-size:15.22px;line-height:15.22px;font-weight:normal;color:#222;transform:scaleX(0.9368);">Home</div>
<div class="t" style="left:1730.72px;top:77.62px;font-size:15.22px;line-height:15.22px;font-weight:normal;color:#222;transform:scaleX(0.9282);">Time</div>
<div class="t" style="left:1806.92px;top:77.62px;font-size:15.22px;line-height:15.22px;font-weight:normal;color:#222;transform:scaleX(0.8900);">Day</div>
<div class="t" style="left:87.35px;top:136.23px;font-size:14.49px;line-height:14.49px;font-weight:normal;color:#fff;transform:scaleX(0.8525);">TODAY</div>
<div class="t" style="left:190.12px;top:135.22px;font-size:24.89px;line-height:24.89px;font-weight:bold;color:#143f8f;transform:scaleX(0.8525);">Fri 29 Nov 2024</div>
<div class="t" style="left:498.82px;top:136.42px;font-size:16.98px;line-height:16.98px;font-weight:bold;color:#111;transform:scaleX(0.8916);">Multi-Day View</div>
<div class="t" style="left:1097.72px;top:143.63px;font-size:14.49px;line-height:14.49px;font-weight:normal;color:#fff;transform:scaleX(0.8478);">DAY</div>
<div class="t" style="left:1203.30px;top:143.63px;font-size:14.49px;line-height:14.49px;font-weight:normal;color:#fff;transform:scaleX(0.8338);">WEEK</div>
<div class="t" style="left:1307.24px;top:143.63px;font-size:14.49px;line-height:14.49px;font-weight:normal;color:#fff;transform:scaleX(0.9164);">MONTH</div>
<div class="t" style="left:1431.93px;top:141.96px;font-size:16.23px;line-height:16.23px;font-weight:normal;color:#222;transform:scaleX(0.9779);">Robert Fish</div>
<div class="t" style="left:113.39px;top:192.93px;font-size:18.99px;line-height:18.99px;font-weight:normal;color:#4a62ae;transform:scaleX(0.9304);">Day</div>
<div class="t" style="left:203.52px;top:193.09px;font-size:19.86px;line-height:19.86px;font-weight:normal;color:#333;transform:scaleX(0.9494);">TimeFinder</div>
<div class="t" style="left:99.93px;top:255.02px;font-size:16.98px;line-height:16.98px;font-weight:bold;color:#111;transform:scaleX(0.8800);">Show</div>
<div class="t" style="left:172.80px;top:254.92px;font-size:17.10px;line-height:17.10px;font-weight:normal;color:#222;transform:scaleX(0.9559);">All entries</div>
<div class="t" style="left:390.34px;top:256.27px;font-size:16.69px;line-height:16.69px;font-weight:bold;color:#111;transform:scaleX(0.8745);">Sort by</div>
<div class="t" style="left:468.18px;top:256.17px;font-size:16.81px;line-height:16.81px;font-weight:normal;color:#222;transform:scaleX(0.9808);">Event time</div>
<div class="t" style="left:691.53px;top:250.90px;font-size:16.36px;line-height:16.36px;font-weight:bold;color:#143f8f;font-family:'Liberation Serif',serif;transform:scaleX(0.8951);">A</div>
<div class="t" style="left:691.90px;top:266.25px;font-size:16.18px;line-height:16.18px;font-weight:bold;color:#143f8f;font-family:'Liberation Serif',serif;transform:scaleX(0.9564);">Z</div>
<div class="t" style="left:759.52px;top:255.31px;font-size:16.40px;line-height:16.40px;font-weight:bold;color:#111;transform:scaleX(0.9174);">Billable status</div>
<div class="t" style="left:891.00px;top:256.21px;font-size:16.52px;line-height:16.52px;font-weight:normal;color:#222;transform:scaleX(0.9811);">All entries</div>
<div class="t" style="left:1435.74px;top:255.69px;font-size:17.84px;line-height:17.84px;font-weight:bold;color:#111;transform:scaleX(0.8307);">FOUND TIME</div>
<div class="t" style="left:1745.36px;top:258.02px;font-size:15.80px;line-height:15.80px;font-weight:normal;color:#333;transform:scaleX(0.9740);">00:13:20</div>
<div class="t" style="left:106.45px;top:313.74px;font-size:16.96px;line-height:16.96px;font-weight:normal;color:#8c8c8c;transform:scaleX(0.9935);">Find worklist item</div>
<div class="t" style="left:491.00px;top:312.53px;font-size:17.68px;line-height:17.68px;font-weight:normal;color:#8c8c8c;transform:scaleX(0.8736);">Search</div>
<div class="t" style="left:1029.14px;top:312.50px;font-size:15.94px;line-height:15.94px;font-weight:normal;color:#111;transform:scaleX(1.0062);">00:00</div>
<div class="t" style="left:1609.70px;top:313.97px;font-size:14.20px;line-height:14.20px;font-weight:normal;color:#fff;transform:scaleX(0.8772);">ADD TIME</div>
<div class="t" style="left:1755.35px;top:313.97px;font-size:14.20px;line-height:14.20px;font-weight:normal;color:#7d7d7d;transform:scaleX(0.8531);">START</div>
<div class="t" style="left:125.28px;top:366.68px;font-size:14.78px;line-height:14.78px;font-weight:normal;color:#333;transform:scaleX(0.9740);">29 Nov</div>
<div class="t" style="left:125.51px;top:384.05px;font-size:14.35px;line-height:14.35px;font-weight:normal;color:#333;transform:scaleX(0.9782);">08:00:00 AM</div>
<div class="t" style="left:211.77px;top:366.77px;font-size:14.68px;line-height:14.68px;font-weight:bold;color:#222;transform:scaleX(0.9415);">19:Arnold Clifton</div>
<div class="t" style="left:212.18px;top:384.14px;font-size:14.24px;line-height:14.24px;font-weight:bold;color:#222;transform:scaleX(0.9843);">96:Will Preparation</div>
<div class="t" style="left:911.34px;top:376.62px;font-size:15.80px;line-height:15.80px;font-weight:normal;color:#111;transform:scaleX(1.0180);">01:00</div>
<div class="t" style="left:1155.38px;top:381.20px;font-size:15.94px;line-height:15.94px;font-weight:normal;color:#222;transform:scaleX(1.0371);">Document Drafting</div>
<div class="t" style="left:1776.27px;top:361.04px;font-size:12.95px;line-height:12.95px;font-weight:bold;color:#fff;transform:scaleX(0.7511);">READY</div>
<div class="t" style="left:125.28px;top:429.68px;font-size:14.78px;line-height:14.78px;font-weight:normal;color:#333;transform:scaleX(0.9740);">29 Nov</div>
<div class="t" style="left:125.51px;top:447.05px;font-size:14.35px;line-height:14.35px;font-weight:normal;color:#333;transform:scaleX(0.9782);">09:12:00 AM</div>
<div class="t" style="left:211.78px;top:429.77px;font-size:14.68px;line-height:14.68px;font-weight:bold;color:#222;transform:scaleX(0.9342);">1:ABC Corporation</div>
<div class="t" style="left:212.03px;top:447.14px;font-size:14.24px;line-height:14.24px;font-weight:bold;color:#222;">7:Document/File Management</div>
<div class="t" style="left:911.34px;top:439.62px;font-size:15.80px;line-height:15.80px;font-weight:normal;color:#111;transform:scaleX(1.0180);">00:00</div>
<div class="t" style="left:1155.44px;top:444.20px;font-size:15.94px;line-height:15.94px;font-weight:normal;color:#222;transform:scaleX(0.9841);">RE: My Injury Email</div>
<div class="t" style="left:1759.23px;top:424.04px;font-size:12.95px;line-height:12.95px;font-weight:bold;color:#fff;transform:scaleX(0.7981);">INCOMPLETE</div>
<div class="t" style="left:125.28px;top:492.68px;font-size:14.78px;line-height:14.78px;font-weight:normal;color:#333;transform:scaleX(0.9740);">29 Nov</div>
<div class="t" style="left:125.51px;top:510.05px;font-size:14.35px;line-height:14.35px;font-weight:normal;color:#333;transform:scaleX(0.9782);">09:30:00 AM</div>
<div class="t" style="left:211.77px;top:492.77px;font-size:14.68px;line-height:14.68px;font-weight:bold;color:#222;transform:scaleX(0.9415);">19:Arnold Clifton</div>
<div class="t" style="left:212.18px;top:510.14px;font-size:14.24px;line-height:14.24px;font-weight:bold;color:#222;transform:scaleX(0.9843);">96:Will Preparation</div>
<div class="t" style="left:911.34px;top:502.62px;font-size:15.80px;line-height:15.80px;font-weight:normal;color:#111;transform:scaleX(1.0180);">00:30</div>
<div class="t" style="left:1155.23px;top:507.20px;font-size:15.94px;line-height:15.94px;font-weight:normal;color:#222;transform:scaleX(1.0258);">I had a meeting with Arnold Clifton</div>
<div class="t" style="left:1776.27px;top:487.04px;font-size:12.95px;line-height:12.95px;font-weight:bold;color:#fff;transform:scaleX(0.7511);">READY</div>
<div class="t" style="left:125.28px;top:555.68px;font-size:14.78px;line-height:14.78px;font-weight:normal;color:#333;transform:scaleX(0.9740);">29 Nov</div>
<div class="t" style="left:125.51px;top:573.05px;font-size:14.35px;line-height:14.35px;font-weight:normal;color:#333;transform:scaleX(0.9782);">01:30:00 PM</div>
<div class="t" style="left:211.77px;top:555.77px;font-size:14.68px;line-height:14.68px;font-weight:bold;color:#222;transform:scaleX(0.9392);">15:Ken Patterson</div>
<div class="t" style="left:212.19px;top:573.14px;font-size:14.24px;line-height:14.24px;font-weight:bold;color:#222;transform:scaleX(0.9654);">91:Personal Injury Suit vs. Mason Corp.</div>
<div class="t" style="left:911.34px;top:565.62px;font-size:15.80px;line-height:15.80px;font-weight:normal;color:#111;transform:scaleX(1.0201);">00:48</div>
<div class="t" style="left:1155.38px;top:570.20px;font-size:15.94px;line-height:15.94px;font-weight:normal;color:#222;transform:scaleX(1.0348);">Document Drafting</div>
<div class="t" style="left:1776.27px;top:550.04px;font-size:12.95px;line-height:12.95px;font-weight:bold;color:#fff;transform:scaleX(0.7511);">READY</div>
<div class="t" style="left:99.65px;top:1195.90px;font-size:14.06px;line-height:14.06px;font-weight:normal;color:#fff;transform:scaleX(0.8651);">SELECT ALL</div>
<div class="t" style="left:215.73px;top:1195.90px;font-size:14.06px;line-height:14.06px;font-weight:normal;color:#fff;transform:scaleX(0.9005);">SUBMIT ALL</div>
<div class="t" style="left:333.02px;top:1195.90px;font-size:14.06px;line-height:14.06px;font-weight:normal;color:#fff;transform:scaleX(0.8738);">RECALL ALL</div>
<div class="t" style="left:431.10px;top:1189.28px;font-size:17.39px;line-height:17.39px;font-weight:normal;color:#3a5ca3;transform:scaleX(0.9377);">Recorded:</div>
<div class="t" style="left:507.87px;top:1189.38px;font-size:17.27px;line-height:17.27px;font-weight:bold;color:#c4470f;transform:scaleX(0.8769);">02:18</div>
<div class="t" style="left:562.07px;top:1189.28px;font-size:17.39px;line-height:17.39px;font-weight:normal;color:#3a5ca3;transform:scaleX(0.9475);">Target:</div>
<div class="t" style="left:613.76px;top:1189.38px;font-size:17.27px;line-height:17.27px;font-weight:bold;color:#1b3f8b;transform:scaleX(0.8944);">06:30</div>
<div class="t" style="left:667.62px;top:1189.28px;font-size:17.39px;line-height:17.39px;font-weight:normal;color:#3a5ca3;transform:scaleX(0.9179);">Missing :</div>
<div class="t" style="left:732.67px;top:1189.38px;font-size:17.27px;line-height:17.27px;font-weight:bold;color:#1b3f8b;transform:scaleX(0.8828);">04:12</div>
</body></html>
